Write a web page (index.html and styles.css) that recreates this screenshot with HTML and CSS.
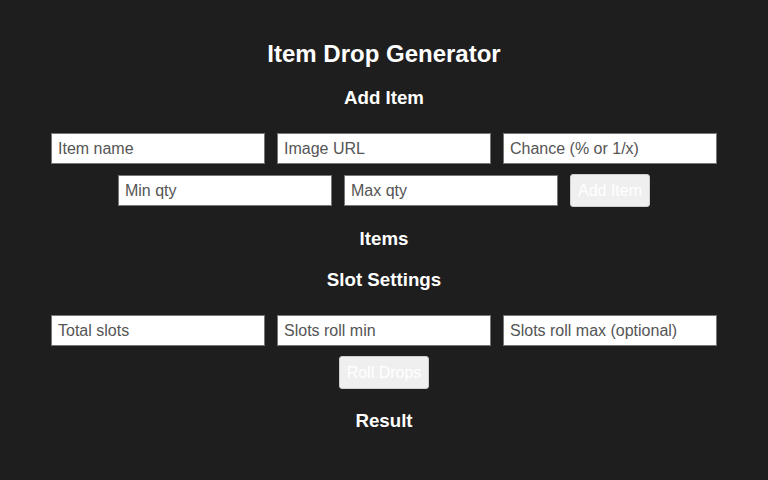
FILE: index.html
```html
<!DOCTYPE html>
<html>
<head>
<meta charset="utf-8">
<link rel="stylesheet" href="styles.css">
</head>
<body>
<div class="app">
  <h2 class="title">Item Drop Generator</h2>
  <h3 class="section">Add Item</h3>
  <div class="form">
    <input class="field" type="text" placeholder="Item name">
    <input class="field" type="text" placeholder="Image URL">
    <input class="field" type="text" placeholder="Chance (% or 1/x)">
    <input class="field" type="number" placeholder="Min qty">
    <input class="field" type="number" placeholder="Max qty">
    <button class="btn">Add Item</button>
  </div>
  <h3 class="section">Items</h3>
  <div class="items"></div>
  <h3 class="section">Slot Settings</h3>
  <div class="form">
    <input class="field" type="number" placeholder="Total slots">
    <input class="field" type="number" placeholder="Slots roll min">
    <input class="field" type="number" placeholder="Slots roll max (optional)">
    <button class="btn">Roll Drops</button>
  </div>
  <h3 class="section">Result</h3>
  <div class="result"></div>
</div>
</body>
</html>
```
FILE: styles.css
```css
html, body {
  margin: 0;
  padding: 0;
  background: #1e1e1e;
}
body {
  color: #ffffff;
  font-family: "Liberation Sans", Arial, sans-serif;
  font-size: 16px;
}
.app {
  padding: 20px 8px;
  text-align: center;
}
.title {
  font-size: 24px;
  font-weight: bold;
  margin: 20px 0;
  line-height: 27px;
}
.section {
  font-size: 18.72px;
  font-weight: bold;
  margin: 19px 0;
  line-height: 22px;
}
.form {
  display: flex;
  flex-wrap: wrap;
  justify-content: center;
  align-items: center;
  gap: 10px 12px;
  margin: 0 auto;
  padding: 5px 0 2px;
  max-width: 680px;
}
.field {
  box-sizing: border-box;
  width: 214px;
  height: 31px;
  margin: 0;
  padding: 0 6px;
  border: 1px solid #767676;
  background: #ffffff;
  color: #000;
  font-family: "Liberation Sans", Arial, sans-serif;
  font-size: 16px;
  border-radius: 0;
  -moz-appearance: textfield;
}
.field::-webkit-outer-spin-button,
.field::-webkit-inner-spin-button {
  -webkit-appearance: none;
  margin: 0;
}
.field::placeholder {
  color: #555555;
}
.btn {
  box-sizing: border-box;
  height: 33px;
  margin: 0;
  padding: 0 7px;
  border: 1px solid #cfcfcf;
  border-radius: 3px;
  background: #efefef;
  color: #ffffff;
  font-family: "Liberation Sans", Arial, sans-serif;
  font-size: 16px;
}
```
